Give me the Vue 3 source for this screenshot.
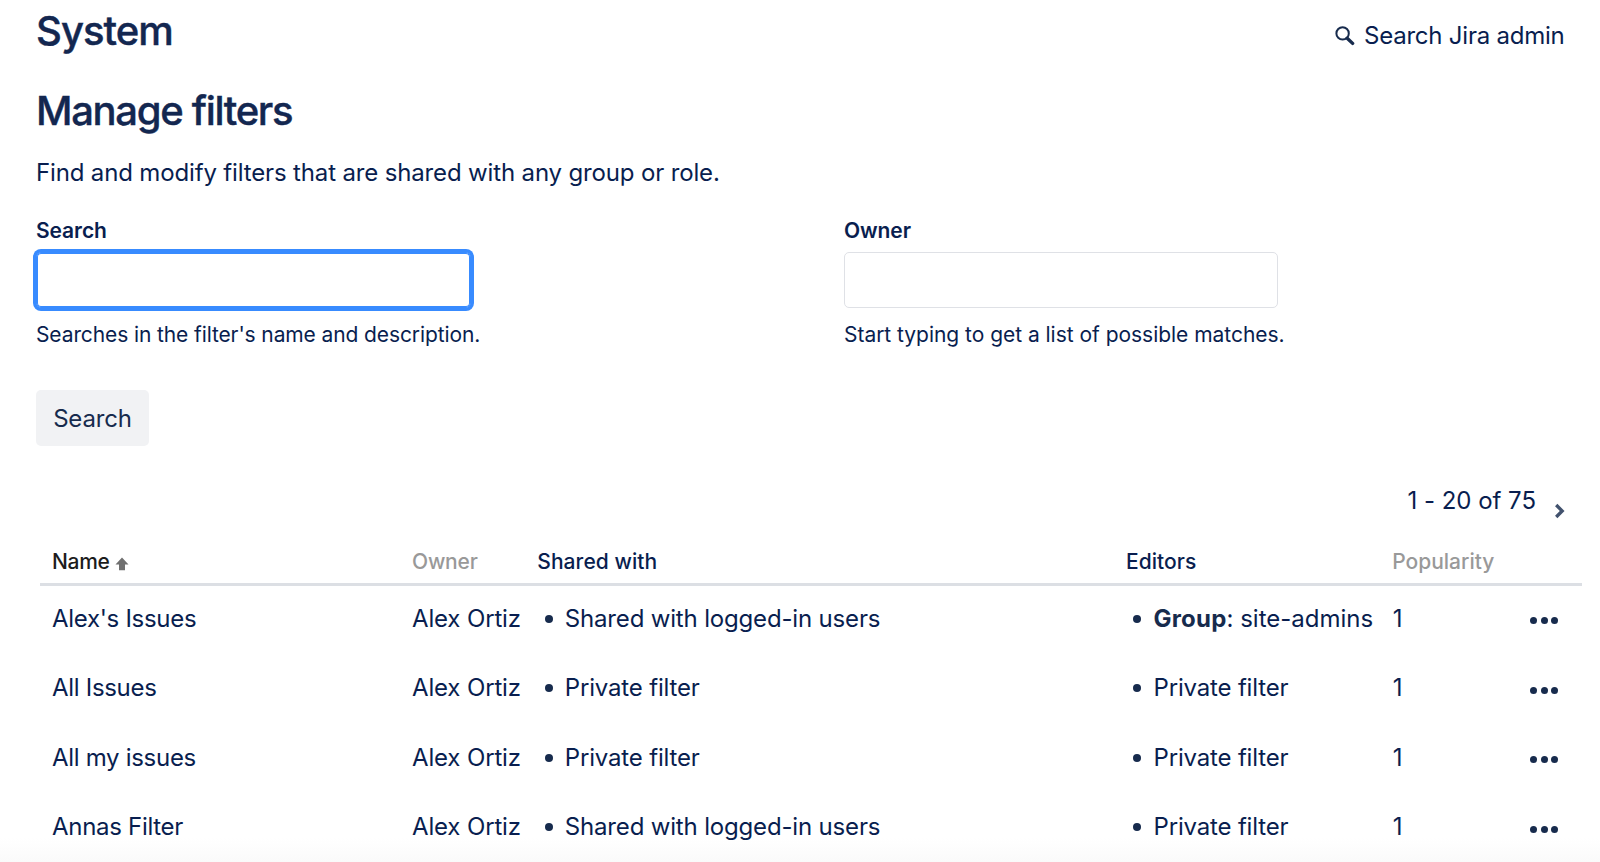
<script setup>
const filters = [
  { name: "Alex's Issues", owner: 'Alex Ortiz', shared: 'Shared with logged-in users', group: 'site-admins', popularity: 1 },
  { name: 'All Issues', owner: 'Alex Ortiz', shared: 'Private filter', group: '', popularity: 1 },
  { name: 'All my issues', owner: 'Alex Ortiz', shared: 'Private filter', group: '', popularity: 1 },
  { name: 'Annas Filter', owner: 'Alex Ortiz', shared: 'Shared with logged-in users', group: '', popularity: 1 },
]
</script>

<template>
  <main class="page">
    <header class="top">
      <h1 class="title system">System</h1>
      <a class="admin-search">
        <svg width="20" height="20" viewBox="0 0 20 20" fill="none">
          <circle cx="7.6" cy="7.4" r="6.2" stroke="#172b4d" stroke-width="2" />
          <path d="M12.2 12.2L17.6 17.4" stroke="#172b4d" stroke-width="3.4" stroke-linecap="round" />
        </svg>
        <span>Search Jira admin</span>
      </a>
    </header>

    <h2 class="title manage">Manage filters</h2>
    <p class="intro">Find and modify filters that are shared with any group or role.</p>

    <form class="form" @submit.prevent>
      <div class="field">
        <label class="label" for="search">Search</label>
        <input id="search" class="input focused" type="text" />
        <p class="help name-help">Searches in the filter's name and description.</p>
      </div>
      <div class="field">
        <label class="label" for="owner">Owner</label>
        <input id="owner" class="input" type="text" />
        <p class="help">Start typing to get a list of possible matches.</p>
      </div>
    </form>
    <button class="button" type="button">Search</button>

    <div class="pager">
      <span>1 - 20 of 75</span>
      <svg width="12" height="16" viewBox="0 0 12 16" fill="none">
        <path d="M2.2 2L8.2 8L2.2 14" stroke="#42526e" stroke-width="3.3" />
      </svg>
    </div>

    <section class="table">
      <div class="row head">
        <span class="sorted">Name<svg width="14" height="14" viewBox="0 0 14 14"><path d="M7 .5L13.5 7.5H10V13.2H4V7.5H.5Z" fill="#707070" /></svg></span>
        <span class="muted">Owner</span>
        <span class="wide">Shared with</span>
        <span class="wide">Editors</span>
        <span class="muted pop">Popularity</span>
        <span></span>
      </div>
      <div v-for="f in filters" :key="f.name" class="row body">
        <span class="name">{{ f.name }}</span>
        <span>{{ f.owner }}</span>
        <span class="item"><i class="bullet"></i>{{ f.shared }}</span>
        <span class="item"><i class="bullet"></i><span v-if="f.group" class="group"><b>Group</b>: {{ f.group }}</span><template v-else>Private filter</template></span>
        <span class="count">{{ f.popularity }}</span>
        <span class="dots"><i></i><i></i><i></i></span>
      </div>
    </section>
  </main>
</template>

<style>
body { margin: 0; overflow: hidden; }
</style>

<style scoped>
* { box-sizing: border-box; }
.page {
  height: 862px;
  overflow: hidden;
  padding: 7px 18px 0 36px;
  background: linear-gradient(#fff 838px, #fafafa 862px);
  color: #091e4f;
  font: 400 24px/32px Inter, sans-serif;
  letter-spacing: -0.15px;
}
.top { display: flex; justify-content: space-between; height: 80px; }
.title { margin: 0; color: #132750; font-size: 40px; line-height: 48px; font-weight: 500; -webkit-text-stroke: 0.4px #132750; }
.system { letter-spacing: -0.95px; }
.manage { letter-spacing: -1.32px; }
.admin-search { display: flex; margin: 13px 17.5px 0 0; height: 32px; letter-spacing: -0.23px; }
.admin-search svg { margin: 6px 9px 0 0; }
.intro { margin: 22px 0 28px; }
.form { display: grid; grid-template-columns: 808px 1fr; }
.field { display: flex; flex-direction: column; align-items: flex-start; }
.label { font-size: 21px; line-height: 28px; font-weight: 600; letter-spacing: -0.08px; }
.input {
  width: 434px;
  height: 56px;
  margin: 7px 0 13px;
  padding: 0 12px;
  border: 1px solid #dfe1e6;
  border-radius: 5px;
  outline: none;
  background: #fff;
  font: inherit;
}
.focused { width: 435px; border-color: #388bff; box-shadow: 0 0 0 3px #388bff, inset 0 0 0 1px #388bff; }
.help { margin: 0; font-size: 21px; line-height: 28px; letter-spacing: -0.03px; }
.name-help { letter-spacing: -0.11px; }
.button {
  display: block;
  width: 113px;
  height: 56px;
  margin-top: 41px;
  padding: 2px 0 0;
  border: 0;
  border-radius: 5px;
  background: #f1f2f4;
  color: #172b4d;
  font: inherit;
  letter-spacing: inherit;
}
.pager { display: flex; justify-content: flex-end; margin: 39px 16px 0 0; height: 32px; letter-spacing: -0.03px; }
.pager svg { margin: 18px 0 0 18px; }
.table { margin: 31px 0 0 4px; }
.row { display: grid; grid-template-columns: 360px 125.3px 588.7px 266.3px 139.7px 1fr; padding-left: 12px; }
.head { height: 38px; border-bottom: 3px solid #dcdfe4; font-size: 21px; line-height: 28px; font-weight: 500; }
.sorted { color: #1c1c1c; letter-spacing: -0.3px; }
.sorted svg { margin-left: 5px; vertical-align: -2px; }
.muted { color: #999; letter-spacing: -0.2px; }
.pop { letter-spacing: -0.02px; }
.wide { letter-spacing: 0.06px; }
.body { height: 69.5px; padding-top: 16.5px; }
.name { letter-spacing: -0.3px; }
.item { display: flex; align-items: center; height: 32px; letter-spacing: -0.17px; }
.bullet { width: 8px; height: 8px; margin: 0 12px 0 7.5px; border-radius: 50%; background: #172b4d; }
.group { letter-spacing: 0; }
.group b { font-weight: 700; color: #172b4d; letter-spacing: 0.2px; }
.count { padding-left: 0.5px; }
.dots { display: flex; gap: 3.3px; margin: 14.5px 0 0 -2px; }
.dots i { width: 7.3px; height: 7.3px; border-radius: 50%; background: #172b4d; }
</style>
